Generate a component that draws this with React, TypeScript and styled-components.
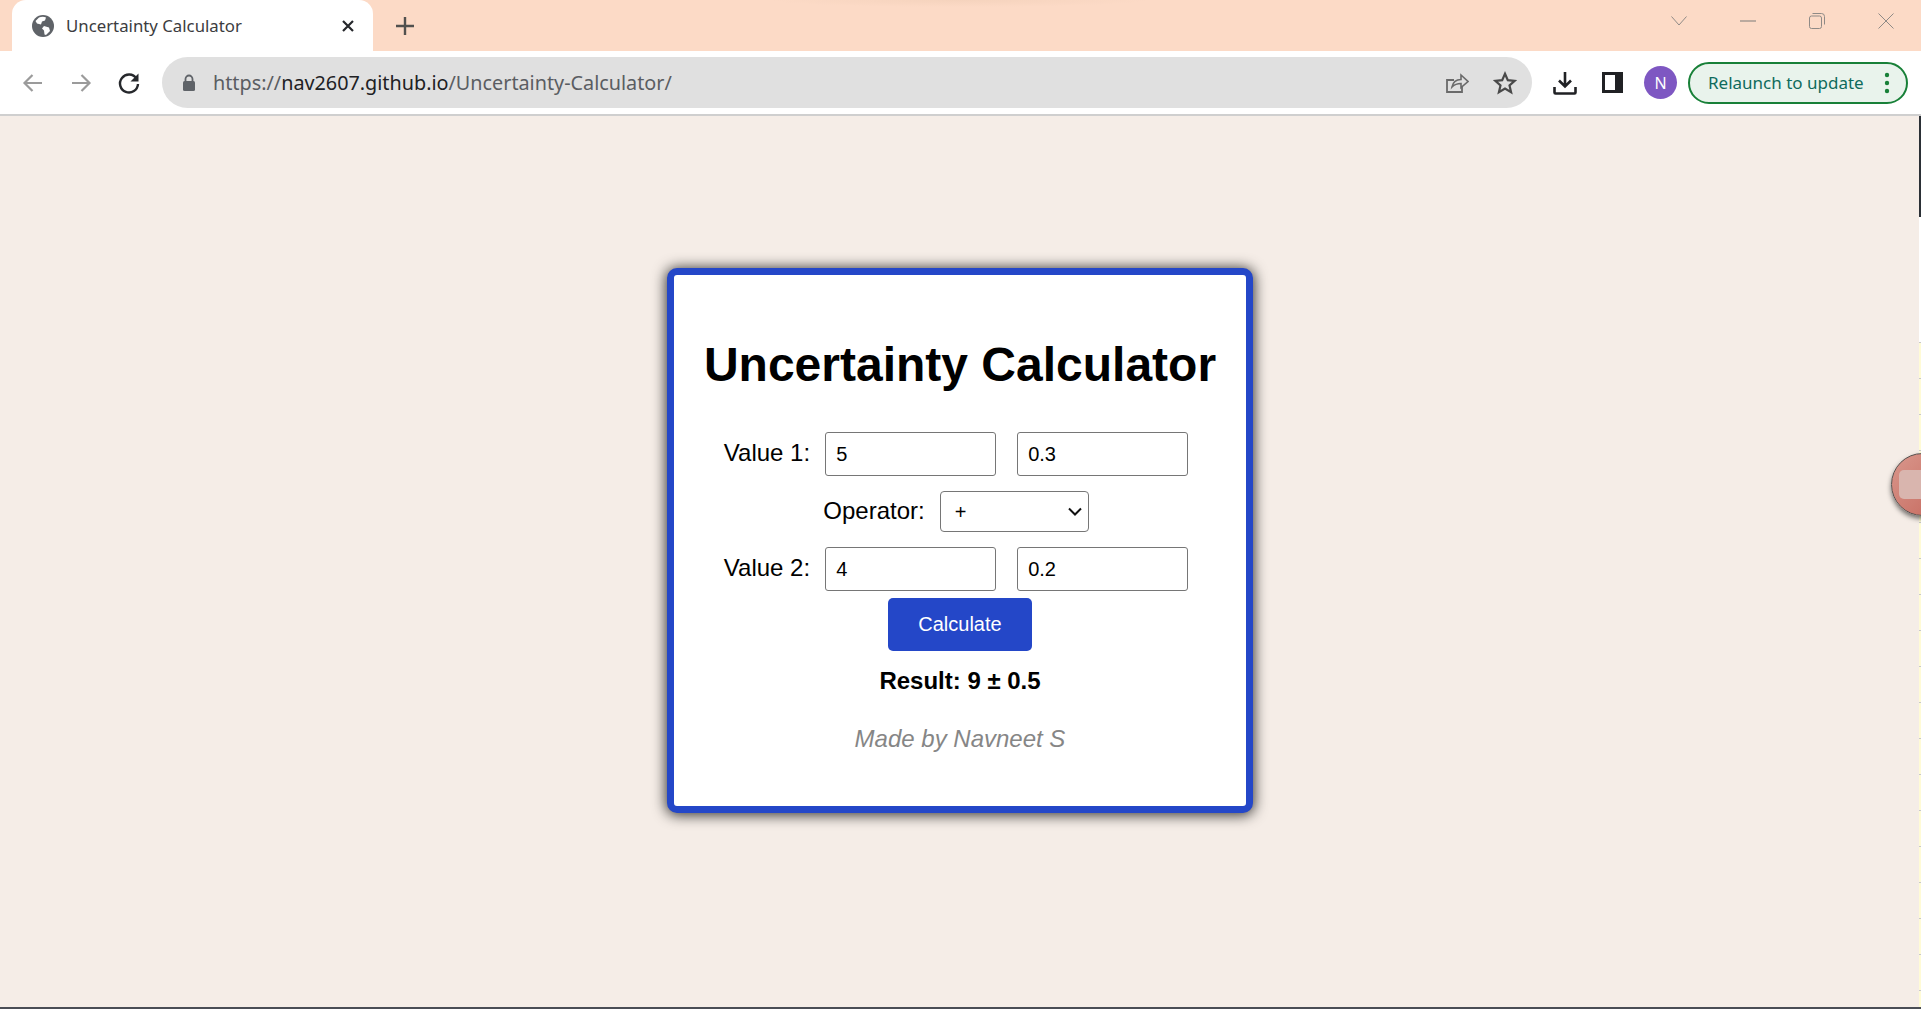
import React from 'react'
import styled, { createGlobalStyle } from 'styled-components'

const GlobalStyle = createGlobalStyle`
  html, body {
    margin: 0;
    padding: 0;
    height: 100%;
    overflow: hidden;
    background: #f5ede7;
  }
  #root {
    height: 100%;
  }
`

const Shell = styled.div`
  display: flex;
  flex-direction: column;
  height: 1009px;
  overflow: hidden;
  font-family: 'Liberation Sans', Arial, sans-serif;
`

const TitleBar = styled.header`
  display: flex;
  align-items: flex-end;
  flex: 0 0 51px;
  height: 51px;
  background: radial-gradient(ellipse 190px 7px at 960px 0, #f5d3bd, transparent), #fcdac6;
  padding-left: 12px;
`

const Tab = styled.div`
  display: flex;
  align-items: center;
  width: 361px;
  height: 51px;
  box-sizing: border-box;
  padding: 0 18px 0 20px;
  background: #fff;
  border-radius: 14px 14px 0 0;
`

const TabTitle = styled.span`
  flex: 1;
  margin-left: 12px;
  font-family: 'Noto Sans', sans-serif;
  font-size: 16.8px;
  color: #3c3c40;
`

const NewTab = styled.div`
  display: flex;
  margin: 0 0 15px 22px;
`

const WindowControls = styled.div`
  display: flex;
  align-items: center;
  gap: 53px;
  margin: 0 27px 22px auto;
`

const Toolbar = styled.nav`
  display: flex;
  align-items: center;
  flex: 0 0 63px;
  height: 63px;
  background: #fff;
  padding: 0 14px 0 21px;
  box-sizing: border-box;
`

const NavButtons = styled.div`
  display: flex;
  align-items: center;
  gap: 24px;
  margin-right: 21px;
`

const AddressBar = styled.div`
  display: flex;
  align-items: center;
  flex: 0 0 1370px;
  height: 51px;
  box-sizing: border-box;
  padding: 0 15px 0 20px;
  background: #e0e0e0;
  border-radius: 26px;
`

const Url = styled.span`
  flex: 1;
  margin-left: 17px;
  font-family: 'Noto Sans', sans-serif;
  font-size: 19.8px;
  color: #5a5d62;
`

const UrlHost = styled.span`
  color: #202124;
`

const AddressActions = styled.div`
  display: flex;
  align-items: center;
  gap: 24px;
`

const ToolbarActions = styled.div`
  display: flex;
  align-items: center;
  gap: 12px;
  margin-left: 21px;
`

const PanelSlot = styled.span`
  display: flex;
  margin-left: 13px;
`

const Avatar = styled.div`
  display: flex;
  align-items: center;
  justify-content: center;
  width: 33px;
  height: 33px;
  margin-left: 9px;
  border-radius: 50%;
  background: #7e57c2;
  color: #fff;
  font-family: 'Noto Sans', sans-serif;
  font-size: 16px;
`

const RelaunchPill = styled.div`
  display: flex;
  align-items: center;
  justify-content: space-between;
  width: 220px;
  height: 42px;
  box-sizing: border-box;
  margin-left: -1px;
  padding: 0 16px 0 18px;
  border: 2px solid #188038;
  border-radius: 21px;
  background: #e9f3ec;
  color: #0f6b5c;
  font-family: 'Noto Sans', sans-serif;
  font-size: 17px;
  white-space: nowrap;
`

const ToolbarRule = styled.div`
  flex: 0 0 2px;
  background: #cfcfcf;
`

const Viewport = styled.div`
  position: relative;
  display: flex;
  flex: 1;
  min-height: 0;
  overflow: hidden;
`

const Page = styled.main`
  display: flex;
  justify-content: center;
  align-items: flex-start;
  flex: 1;
  padding: 152px 0 0 1px;
  background: #f5ede7;
`

const Card = styled.section`
  width: 586px;
  height: 545px;
  box-sizing: border-box;
  border: 7px solid #2447c8;
  border-radius: 10px;
  background: #fff;
  box-shadow: 0 1px 14px 1px rgba(0, 0, 0, 0.8);
  text-align: center;
`

const Heading = styled.h1`
  margin: 62px 0 39px;
  font-size: 48px;
  line-height: 56px;
  font-weight: 700;
  color: #000;
`

const FormRow = styled.div<{ $below: number }>`
  display: flex;
  justify-content: center;
  align-items: flex-start;
  padding-right: 8px;
  margin-bottom: ${(props) => props.$below}px;
`

const FieldLabel = styled.label<{ $leading: number }>`
  margin-right: 15px;
  font-size: 24px;
  line-height: ${(props) => props.$leading}px;
  color: #000;
`

const NumberInput = styled.input`
  width: 171px;
  height: 44px;
  box-sizing: border-box;
  margin: 0;
  padding: 0 10px;
  border: 1px solid #767676;
  border-radius: 3px;
  background: #fff;
  font-family: inherit;
  font-size: 20px;
  color: #000;
  outline: none;
  & + & {
    margin-left: 21px;
  }
`

const SelectWrap = styled.div`
  position: relative;
  display: flex;
`

const OperatorSelect = styled.select`
  appearance: none;
  width: 149px;
  height: 41px;
  box-sizing: border-box;
  margin: 0;
  padding: 0 14px;
  border: 1px solid #767676;
  border-radius: 4px;
  background: #fff;
  font-family: inherit;
  font-size: 20px;
  color: #000;
`

const SelectChevron = styled.svg`
  position: absolute;
  top: 16px;
  right: 7px;
  pointer-events: none;
`

const CalculateButton = styled.button`
  display: block;
  width: 144px;
  height: 53px;
  margin: 0 auto;
  padding: 0;
  border: 0;
  border-radius: 5px;
  background: #2447c8;
  color: #fff;
  font-family: inherit;
  font-size: 20px;
`

const Result = styled.p`
  margin: 16px 0 0;
  font-size: 24px;
  line-height: 28px;
  font-weight: 700;
  color: #000;
`

const Credit = styled.p`
  margin: 30px 0 0;
  font-size: 24px;
  line-height: 28px;
  font-style: italic;
  color: #868686;
`

const ScrollRail = styled.div`
  display: flex;
  flex-direction: column;
  flex: 0 0 2px;
`

const ScrollThumb = styled.div`
  flex: 0 0 101px;
  background: #2b3036;
`

const ScrollBlank = styled.div`
  flex: 0 0 125px;
  background: #fff;
`

const ScrollYellow = styled.div`
  flex: 1;
  background: repeating-linear-gradient(#c8c8c8 0 1px, #fffbd6 1px 36px);
`

const StopBadge = styled.div`
  position: absolute;
  top: 337px;
  right: -33px;
  width: 63px;
  height: 63px;
  box-sizing: border-box;
  border: 1px solid #55504e;
  border-radius: 50%;
  background: linear-gradient(135deg, #d9978c, #c5675c);
  box-shadow: 0 3px 5px rgba(0, 0, 0, 0.55);
`

const StopBar = styled.div`
  position: absolute;
  top: 16px;
  left: 7px;
  width: 50px;
  height: 29px;
  border-radius: 5px;
  background: #d9b5ae;
`

const BottomEdge = styled.div`
  flex: 0 0 2px;
  background: #4a4d55;
`

const Globe = () => (
  <svg width="22" height="22" viewBox="0 0 22 22">
    <circle cx="11" cy="11" r="11" fill="#5f6368" />
    <path d="M7 2.500c2-.8 5-1 7 0l-1 3-3 1-1 3-4-1-1.500-2.500zM12 11l5 1.500 1 3.500-4 4-1.500-.5-.5-4-2-2z" fill="#fff" />
  </svg>
)

const CloseGlyph = () => (
  <svg width="14" height="14" viewBox="0 0 14 14">
    <path d="M2 2l10 10M12 2L2 12" stroke="#26282c" strokeWidth="2.200" />
  </svg>
)

const PlusGlyph = () => (
  <svg width="20" height="20" viewBox="0 0 20 20">
    <path d="M10 1v18M1 10h18" stroke="#51504e" strokeWidth="2.400" />
  </svg>
)

const ArrowGlyph = ({ flip }: { flip?: boolean }) => (
  <svg width="24" height="24" viewBox="0 0 24 24" transform={flip ? 'scale(-1 1)' : undefined}>
    <path d="M21 12H4M11.500 4L3.500 12l8 8" fill="none" stroke="#9b9b9b" strokeWidth="2.200" />
  </svg>
)

const ReloadGlyph = () => (
  <svg width="24" height="24" viewBox="0 0 24 24">
    <path d="M19.500 7.500A9 9 0 1 0 21 13" fill="none" stroke="#26282c" strokeWidth="2.400" />
    <path d="M21.500 2.500v8h-8z" fill="#26282c" />
  </svg>
)

const LockGlyph = () => (
  <svg width="14" height="18" viewBox="0 0 14 18">
    <path d="M3.500 7V5a3.500 3.500 0 0 1 7 0v2" fill="none" stroke="#5f6368" strokeWidth="1.800" />
    <rect x="1" y="7" width="12" height="10" rx="1.500" fill="#5f6368" />
  </svg>
)

const ShareGlyph = () => (
  <svg width="24" height="24" viewBox="0 0 24 24">
    <path d="M17 12.500V21H2V9h7" fill="none" stroke="#6a6a6a" strokeWidth="1.800" />
    <path d="M7 16c1-5 4-7.500 9-7.500V4l7 6.500-7 6v-4c-4 0-6.500 1-9 3.500z" fill="#e0e0e0" stroke="#6a6a6a" strokeWidth="1.600" />
  </svg>
)

const StarGlyph = () => (
  <svg width="24" height="24" viewBox="0 0 24 24">
    <path d="M12 2.800l2.800 6.400 6.900.6-5.200 4.600 1.600 6.800-6.100-3.600-6.100 3.600 1.600-6.800-5.200-4.600 6.900-.6z" fill="none" stroke="#4a4a4a" strokeWidth="2.200" />
  </svg>
)

const DownloadGlyph = () => (
  <svg width="24" height="24" viewBox="0 0 24 24">
    <path d="M12 1v14M6 9.500l6 6 6-6" fill="none" stroke="#202124" strokeWidth="2.600" />
    <path d="M1.500 16v5.500a1 1 0 0 0 1 1h19a1 1 0 0 0 1-1V16" fill="none" stroke="#202124" strokeWidth="2.600" />
  </svg>
)

const PanelGlyph = () => (
  <svg width="21" height="21" viewBox="0 0 21 21">
    <rect width="21" height="21" fill="#202124" />
    <rect x="3" y="3" width="10" height="15" fill="#fff" />
  </svg>
)

const DotsGlyph = () => (
  <svg width="6" height="22" viewBox="0 0 6 22">
    <circle cx="3" cy="3" r="2.200" fill="#188038" />
    <circle cx="3" cy="11" r="2.200" fill="#188038" />
    <circle cx="3" cy="19" r="2.200" fill="#188038" />
  </svg>
)

const ChevronGlyph = () => (
  <svg width="16" height="10" viewBox="0 0 16 10">
    <path d="M.5 .5L8 9l7.500-8.500" fill="none" stroke="#8f8a86" strokeWidth="1" />
  </svg>
)

const MinimizeGlyph = () => (
  <svg width="16" height="16" viewBox="0 0 16 16">
    <path d="M0 8h16" stroke="#8f8a86" strokeWidth="1.200" />
  </svg>
)

const RestoreGlyph = () => (
  <svg width="16" height="16" viewBox="0 0 16 16">
    <rect x=".5" y="3" width="12" height="12.500" rx="2" fill="none" stroke="#8f8a86" />
    <path d="M3.500 .5h9a3 3 0 0 1 3 3v8" fill="none" stroke="#8f8a86" />
  </svg>
)

const WindowCloseGlyph = () => (
  <svg width="16" height="16" viewBox="0 0 16 16">
    <path d="M.5 .5l15 15M15.500 .5l-15 15" stroke="#8f8a86" strokeWidth="1" />
  </svg>
)

const App: React.FC = () => {
  return (
    <Shell>
      <GlobalStyle />
      <TitleBar>
        <Tab>
          <Globe />
          <TabTitle>Uncertainty Calculator</TabTitle>
          <CloseGlyph />
        </Tab>
        <NewTab>
          <PlusGlyph />
        </NewTab>
        <WindowControls>
          <ChevronGlyph />
          <MinimizeGlyph />
          <RestoreGlyph />
          <WindowCloseGlyph />
        </WindowControls>
      </TitleBar>
      <Toolbar>
        <NavButtons>
          <ArrowGlyph />
          <ArrowGlyph flip />
          <ReloadGlyph />
        </NavButtons>
        <AddressBar>
          <LockGlyph />
          <Url>
            https://<UrlHost>nav2607.github.io</UrlHost>/Uncertainty-Calculator/
          </Url>
          <AddressActions>
            <ShareGlyph />
            <StarGlyph />
          </AddressActions>
        </AddressBar>
        <ToolbarActions>
          <DownloadGlyph />
          <PanelSlot>
            <PanelGlyph />
          </PanelSlot>
          <Avatar>N</Avatar>
          <RelaunchPill>
            Relaunch to update
            <DotsGlyph />
          </RelaunchPill>
        </ToolbarActions>
      </Toolbar>
      <ToolbarRule />
      <Viewport>
        <Page>
          <Card>
            <Heading>Uncertainty Calculator</Heading>
            <FormRow $below={15}>
              <FieldLabel $leading={41}>Value 1:</FieldLabel>
              <NumberInput readOnly value="5" />
              <NumberInput readOnly value="0.3" />
            </FormRow>
            <FormRow $below={15}>
              <FieldLabel $leading={39}>Operator:</FieldLabel>
              <SelectWrap>
                <OperatorSelect defaultValue="+">
                  <option value="+">+</option>
                  <option value="-">-</option>
                  <option value="*">*</option>
                  <option value="/">/</option>
                </OperatorSelect>
                <SelectChevron width="14" height="9" viewBox="0 0 14 9">
                  <path d="M1 1.500l6 6 6-6" fill="none" stroke="#111" strokeWidth="2" />
                </SelectChevron>
              </SelectWrap>
            </FormRow>
            <FormRow $below={7}>
              <FieldLabel $leading={41}>Value 2:</FieldLabel>
              <NumberInput readOnly value="4" />
              <NumberInput readOnly value="0.2" />
            </FormRow>
            <CalculateButton>Calculate</CalculateButton>
            <Result>Result: 9 ± 0.5</Result>
            <Credit>Made by Navneet S</Credit>
          </Card>
        </Page>
        <ScrollRail>
          <ScrollThumb />
          <ScrollBlank />
          <ScrollYellow />
        </ScrollRail>
        <StopBadge>
          <StopBar />
        </StopBadge>
      </Viewport>
      <BottomEdge />
    </Shell>
  )
}

export default App
